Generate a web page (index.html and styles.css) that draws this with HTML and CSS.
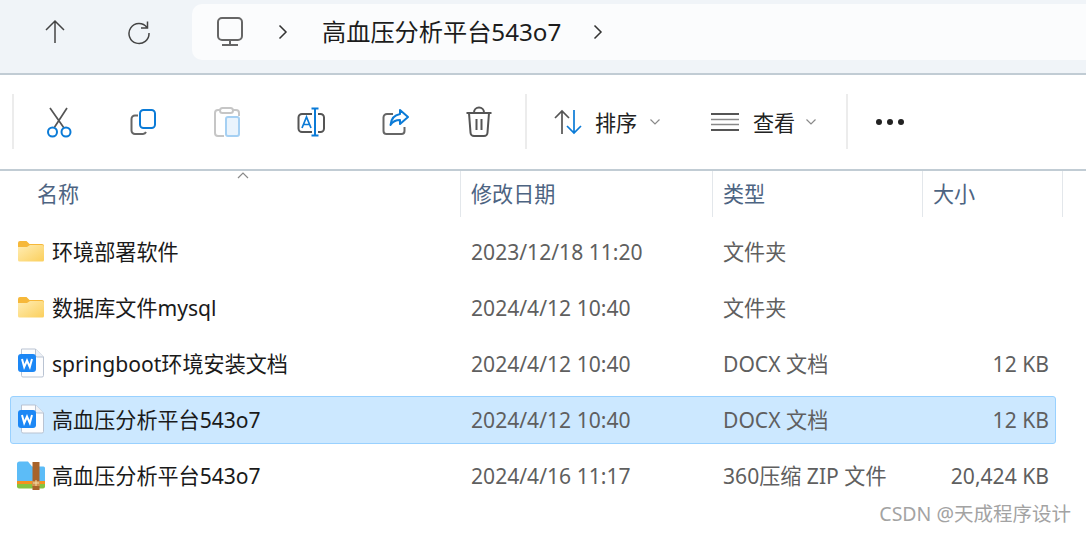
FILE: index.html
```html
<!DOCTYPE html>
<html lang="zh">
<head>
<meta charset="utf-8">
<title>高血压分析平台543o7</title>
<link rel="stylesheet" href="styles.css">
</head>
<body>
<svg class="defs" width="0" height="0" aria-hidden="true">
  <defs>
    <linearGradient id="folderFill" x1="0" y1="0" x2="1" y2="1">
      <stop offset="0" stop-color="#ffedb4"/>
      <stop offset="1" stop-color="#fbcf5c"/>
    </linearGradient>
    <symbol id="folder" viewBox="0 0 28 24">
      <path d="M1 4a2 2 0 0 1 2-2h6.500l3 3H25a2 2 0 0 1 2 2v2H1z" fill="#f6b83a"/>
      <path d="M1 8h9l3-2h12a2 2 0 0 1 2 2v13a1.500 1.500 0 0 1-1.500 1.500h-23A1.500 1.500 0 0 1 1 21z" fill="url(#folderFill)"/>
    </symbol>
    <symbol id="word" viewBox="0 0 28 30">
      <path d="M4.500 1h14l8 8v18.500a1.500 1.500 0 0 1-1.500 1.500H6a1.500 1.500 0 0 1-1.500-1.500z" fill="#fdfdfe" stroke="#b9c3d2"/>
      <path d="M18.500 1v6.500a1.500 1.500 0 0 0 1.500 1.500h6.500" fill="#eef1f6" stroke="#b9c3d2"/>
      <rect x="1" y="6" width="18" height="18" rx="3" fill="#1c87f5"/>
      <path d="M5 11l2.200 8 2.800-6.500 2.800 6.500 2.200-8" fill="none" stroke="#fff" stroke-width="2"/>
    </symbol>
    <symbol id="zip" viewBox="0 0 30 30">
      <path d="M1 4a2.500 2.500 0 0 1 2.500-2.500H12l4 5h11.500A1.500 1.500 0 0 1 29 8v15H1z" fill="#5cbcf7"/>
      <path d="M1 21h28v3H1z" fill="#f5911e"/>
      <path d="M1 24h28v2.500a2 2 0 0 1-2 2H3a2 2 0 0 1-2-2z" fill="#86c440"/>
      <rect x="16.500" y="2" width="7" height="28" fill="#a8632a"/>
      <path d="M16 21h8v5h-8z" fill="#d1934d"/>
      <path d="M20 20v6M17 23h6" stroke="#f3dca6" fill="none"/>
    </symbol>
    <symbol id="chev" viewBox="0 0 12 8">
      <path d="M1.500 1.500L6 6l4.500-4.500" fill="none" stroke="#8a8a8a" stroke-width="1.200"/>
    </symbol>
  </defs>
</svg>

<header class="navbar">
  <div class="nav-buttons">
    <span class="nav-btn">
      <svg width="24" height="26" viewBox="0 0 24 26"><path d="M12 24V2M3 11l9-9 9 9" fill="none" stroke="#444" stroke-width="1.500"/></svg>
    </span>
    <span class="nav-btn">
      <svg width="24" height="26" viewBox="0 0 24 26"><path d="M20 8.500A10 10 0 1 0 22 14M20.500 2.500v6.500h-6.500" fill="none" stroke="#444" stroke-width="1.500"/></svg>
    </span>
  </div>
  <nav class="address">
    <svg class="monitor" width="26" height="32" viewBox="0 0 26 32"><rect x="1" y="2" width="24" height="22" rx="4" fill="none" stroke="#666" stroke-width="2"/><path d="M13 24v5M5 29h16" fill="none" stroke="#666" stroke-width="2"/></svg>
    <svg class="crumb-sep" width="10" height="16" viewBox="0 0 10 16"><path d="M1.500 1.500L8 8l-6.500 6.500" fill="none" stroke="#333" stroke-width="1.500"/></svg>
    <span class="crumb">高血压分析平台543o7</span>
    <svg class="crumb-sep" width="10" height="16" viewBox="0 0 10 16"><path d="M1.500 1.500L8 8l-6.500 6.500" fill="none" stroke="#333" stroke-width="1.500"/></svg>
  </nav>
</header>

<section class="toolbar">
  <div class="tool-group">
    <span class="tool">
      <svg width="30" height="36" viewBox="0 0 30 36"><path d="M6 4l14 20M23 4L10 24" fill="none" stroke="#555" stroke-width="1.700"/><circle cx="8.500" cy="28" r="4.500" fill="none" stroke="#0b7bd7" stroke-width="2"/><circle cx="22" cy="28" r="4.500" fill="none" stroke="#0b7bd7" stroke-width="2"/></svg>
    </span>
    <span class="tool">
      <svg width="30" height="36" viewBox="0 0 30 36"><path d="M10 11.500H7a3.500 3.500 0 0 0-3.500 3.500v11.500A3.500 3.500 0 0 0 7 30h8a3.500 3.500 0 0 0 3-2" fill="none" stroke="#666" stroke-width="2"/><rect x="12" y="6" width="15" height="18" rx="3.500" fill="#fff" stroke="#0b7bd7" stroke-width="2"/></svg>
    </span>
    <span class="tool">
      <svg width="30" height="36" viewBox="0 0 30 36"><path d="M8 6H6a3 3 0 0 0-3 3v20a3 3 0 0 0 3 3h6M21 6h3a3 3 0 0 1 3 3v3" fill="none" stroke="#c6c6c6" stroke-width="2"/><rect x="8" y="4" width="13" height="5" rx="2.500" fill="#fff" stroke="#c6c6c6" stroke-width="2"/><rect x="14" y="13" width="13" height="19" rx="2" fill="#eaf4fd" stroke="#a5d0f3" stroke-width="2"/></svg>
    </span>
    <span class="tool">
      <svg width="30" height="36" viewBox="0 0 30 36"><path d="M16 10H6a3.500 3.500 0 0 0-3.500 3.500v11A3.500 3.500 0 0 0 6 28h10M22 10h2.500a3.500 3.500 0 0 1 3.500 3.500v11a3.500 3.500 0 0 1-3.500 3.500H22" fill="none" stroke="#555" stroke-width="2"/><path d="M19 5v26M15.500 4.500h7M15.500 31.500h7" fill="none" stroke="#0b7bd7" stroke-width="2"/><path d="M6 24L10.500 13 15 24M7.500 20.500h6" fill="none" stroke="#0b7bd7" stroke-width="1.700"/></svg>
    </span>
    <span class="tool">
      <svg width="30" height="36" viewBox="0 0 30 36"><path d="M13 10H7a3.500 3.500 0 0 0-3.500 3.500v13.500A3 3 0 0 0 6.500 30h15a3 3 0 0 0 3-3v-4" fill="none" stroke="#666" stroke-width="2"/><path d="M20 6l8 7-8 7v-4c-4 0-7 1-9.500 5 .5-6 4-10 9.500-11z" fill="#fff" stroke="#0b7bd7" stroke-width="2" stroke-linejoin="round"/></svg>
    </span>
    <span class="tool">
      <svg width="30" height="36" viewBox="0 0 30 36"><path d="M2.500 9h25M10 8.500a5 5 0 0 1 10 0M5 9l1.500 19.500a3.500 3.500 0 0 0 3.500 3.500h10a3.500 3.500 0 0 0 3.500-3.500L25 9M12.500 15v11M17.500 15v11" fill="none" stroke="#555" stroke-width="2"/></svg>
    </span>
  </div>
  <div class="tool-group sort-group">
    <span class="menu-tool">
      <svg class="menu-icon" width="30" height="26" viewBox="0 0 30 26"><path d="M9 25V2M2 9l7-7 7 7" fill="none" stroke="#555" stroke-width="1.700"/><path d="M21 1v23M14 17l7 7 7-7" fill="none" stroke="#0b7bd7" stroke-width="1.700"/></svg>
      <span class="menu-label">排序</span>
      <svg class="menu-chev" width="12" height="8"><use href="#chev"/></svg>
    </span>
    <span class="menu-tool view-tool">
      <svg class="menu-icon" width="28" height="20" viewBox="0 0 28 20"><path d="M0 2h28" stroke="#555" stroke-width="2"/><path d="M0 7.500h28" stroke="#888" stroke-width="1.500"/><path d="M0 12.500h28" stroke="#888" stroke-width="1.500"/><path d="M0 18h28" stroke="#555" stroke-width="2"/></svg>
      <span class="menu-label">查看</span>
      <svg class="menu-chev" width="12" height="8"><use href="#chev"/></svg>
    </span>
  </div>
  <div class="tool-group more-group">
    <span class="dots"><i></i><i></i><i></i></span>
  </div>
</section>

<main class="table">
  <div class="thead">
    <span class="th th-name">名称<svg class="sort-caret" width="12" height="7" viewBox="0 0 12 7"><path d="M1 6l5-5 5 5" fill="none" stroke="#8a8a8a" stroke-width="1.200"/></svg></span>
    <span class="th">修改日期</span>
    <span class="th">类型</span>
    <span class="th">大小</span>
  </div>
  <div class="rows">
    <div class="row">
      <span class="name"><svg class="file-icon" width="28" height="24"><use href="#folder"/></svg><span>环境部署软件</span></span>
      <span class="cell">2023/12/18 11:20</span>
      <span class="cell">文件夹</span>
      <span class="cell size"></span>
    </div>
    <div class="row">
      <span class="name"><svg class="file-icon" width="28" height="24"><use href="#folder"/></svg><span>数据库文件mysql</span></span>
      <span class="cell">2024/4/12 10:40</span>
      <span class="cell">文件夹</span>
      <span class="cell size"></span>
    </div>
    <div class="row">
      <span class="name"><svg class="file-icon" width="28" height="30"><use href="#word"/></svg><span>springboot环境安装文档</span></span>
      <span class="cell">2024/4/12 10:40</span>
      <span class="cell">DOCX 文档</span>
      <span class="cell size">12 KB</span>
    </div>
    <div class="row selected">
      <span class="name"><svg class="file-icon" width="28" height="30"><use href="#word"/></svg><span>高血压分析平台543o7</span></span>
      <span class="cell">2024/4/12 10:40</span>
      <span class="cell">DOCX 文档</span>
      <span class="cell size">12 KB</span>
    </div>
    <div class="row">
      <span class="name"><svg class="file-icon zip-icon" width="30" height="30"><use href="#zip"/></svg><span>高血压分析平台543o7</span></span>
      <span class="cell">2024/4/16 11:17</span>
      <span class="cell">360压缩 ZIP 文件</span>
      <span class="cell size">20,424 KB</span>
    </div>
  </div>
</main>

<div class="watermark">CSDN @天成程序设计</div>
</body>
</html>
```

FILE: styles.css
```css
* { box-sizing: border-box; }
html, body { margin: 0; height: 100%; }
body {
  width: 1086px;
  height: 533px;
  overflow: hidden;
  position: relative;
  background: #fff;
  font-family: "Noto Sans", "Noto Sans CJK SC", "Liberation Sans", sans-serif;
  font-size: 21.1px;
  color: #1a1a1a;
}
.defs { position: absolute; }
svg { display: block; flex: none; }

/* Navigation bar */
.navbar {
  height: 75px;
  display: flex;
  align-items: flex-start;
  padding-top: 4px;
  background: #f0f4f8;
  border-bottom: 2px solid #c1ccd4;
}
.nav-buttons { display: flex; width: 192px; padding-left: 13px; }
.nav-btn {
  width: 84px;
  height: 56px;
  display: flex;
  align-items: center;
  justify-content: center;
}
.address {
  flex: 1;
  height: 56px;
  display: flex;
  align-items: center;
  padding-left: 25px;
  background: #fbfcfd;
  border-radius: 10px 0 0 10px;
}
.monitor { margin-right: 35px; }
.crumb {
  margin: 0 32px 4px 34px;
  font-size: 24.2px;
  color: #1c1c1c;
  white-space: nowrap;
}

/* Command bar */
.toolbar {
  height: 96px;
  display: flex;
  align-items: center;
  padding-left: 12px;
  border-bottom: 2px solid #c1ccd4;
}
.tool-group {
  height: 55px;
  display: flex;
  align-items: center;
  border-left: 2px solid #ececec;
  margin-top: -1px;
}
.tool-group:first-child { width: 513px; padding-left: 3px; }
.tool {
  width: 84px;
  height: 55px;
  display: flex;
  align-items: center;
  justify-content: center;
}
.sort-group { width: 321px; padding-left: 26px; }
.menu-tool { display: flex; align-items: center; }
.menu-icon { margin-right: 12px; }
.menu-label { width: 42px; color: #222; white-space: nowrap; }
.menu-chev { margin-left: 12px; }
.view-tool { margin-left: 50px; }
.view-tool .menu-icon { margin-right: 14px; }
.view-tool .menu-chev { margin-left: 10px; }
.more-group { padding-left: 28px; }
.dots { display: flex; gap: 5px; }
.dots i { width: 6px; height: 6px; border-radius: 50%; background: #222; }

/* Details table */
.thead {
  height: 46px;
  display: grid;
  grid-template-columns: 461px 252px 210px 140px;
}
.th {
  position: relative;
  padding: 0 0 3px 10px;
  display: flex;
  align-items: center;
  border-right: 1px solid #e3e7eb;
  color: #4d6482;
  white-space: nowrap;
}
.th-name { padding-left: 37px; }
.sort-caret { position: absolute; left: 237px; top: 1px; }

.rows {
  display: flex;
  flex-direction: column;
  gap: 8px;
  padding: 11px 30px 0 10px;
}
.row {
  height: 48px;
  display: grid;
  grid-template-columns: 450px 252px 210px 134px;
  align-items: baseline;
  padding-top: 7px;
  border: 1px solid transparent;
  border-radius: 3px;
}
.row.selected { background: #cce8ff; border-color: #99d1ff; }
.name {
  display: flex;
  align-items: baseline;
  padding-left: 6px;
  white-space: nowrap;
  color: #1a1a1a;
}
.file-icon { align-self: center; margin-right: 7px; }
.zip-icon { margin: 0 6px 0 -1px; }
.cell { padding-left: 10px; color: #5f5f5f; white-space: nowrap; }
.cell.size { padding: 0 8px 0 0; text-align: right; }

.watermark {
  position: absolute;
  right: 15px;
  top: 501px;
  font-size: 19.5px;
  line-height: 26px;
  color: #a3a3a3;
  white-space: nowrap;
}
```
